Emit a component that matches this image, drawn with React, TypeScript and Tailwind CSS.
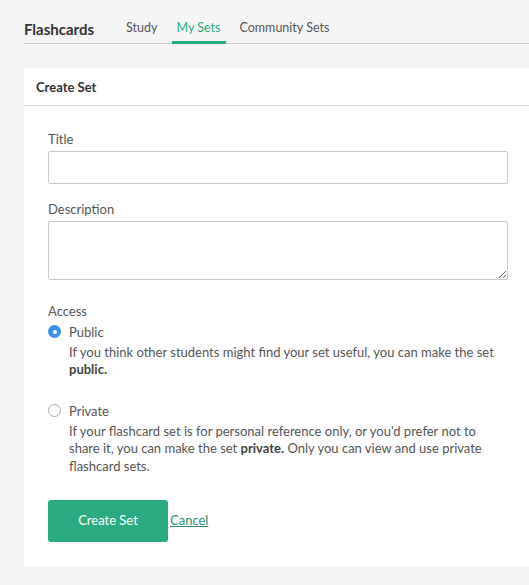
import { useState } from 'react';

const tabs = ['Study', 'My Sets', 'Community Sets'];

export default function App() {
  const [access, setAccess] = useState<'public' | 'private'>('public');
  const active = 'My Sets';

  return (
    <div className="min-h-[585px] bg-[#f5f5f5] pt-[18px] pb-[19px] pl-6 font-['Lato',sans-serif] text-[#555]">
      <header className="flex items-end border-b border-[#d0d0d0]">
        <h1 className="pb-[2px] pr-[28px] text-[15px] font-bold text-[#333]">Flashcards</h1>
        <nav className="flex gap-[10px]">
          {tabs.map((tab) => (
            <a
              key={tab}
              className={
                tab === active
                  ? 'mb-[-1px] border-b-[3px] border-[#2bab82] px-[5px] pb-[3px] text-[12.5px] text-[#2bab82]'
                  : 'mb-[-1px] border-b-[3px] border-transparent px-[4px] pb-[3px] text-[12.5px] text-[#555]'
              }
              href="#"
            >
              {tab}
            </a>
          ))}
        </nav>
      </header>

      <section className="mt-6 bg-white">
        <div className="border-b border-[#d6d6d6] px-3 pt-[10px] pb-[8px]">
          <h2 className="text-[13px] font-bold text-[#333]">Create Set</h2>
        </div>

        <form className="px-6 pt-[24px] pb-6" onSubmit={(event) => event.preventDefault()}>
          <label className="block text-[13px]">Title</label>
          <input className="mt-[1px] block h-[33px] w-[460px] rounded-[2px] border border-[#c9c9c9] px-2" />

          <label className="mt-[16px] block text-[13px]">Description</label>
          <textarea className="mt-[2px] block h-[59px] w-[460px] rounded-[2px] border border-[#c9c9c9] px-2" />

          <p className="mt-[22px] text-[13px]">Access</p>
          <AccessOption
            checked={access === 'public'}
            label="Public"
            onSelect={() => setAccess('public')}
          >
            If you think other students might find your set useful, you can make the set{' '}
            <b className="text-[#444]">public.</b>
          </AccessOption>
          <div className="h-[22px]" />
          <AccessOption
            checked={access === 'private'}
            label="Private"
            onSelect={() => setAccess('private')}
          >
            If your flashcard set is for personal reference only, or you'd prefer not to share
            it, you can make the set <b className="text-[#444]">private.</b> Only you can view
            and use private flashcard sets.
          </AccessOption>

          <div className="mt-[25px] flex items-center gap-[2px]">
            <button
              className="h-[42px] w-[120px] rounded-[3px] bg-[#2bab82] text-[13px] text-white"
              type="submit"
            >
              Create Set
            </button>
            <a className="text-[13px] text-[#2b8f6e] underline" href="#">
              Cancel
            </a>
          </div>
        </form>
      </section>
    </div>
  );
}

function AccessOption({
  checked,
  label,
  onSelect,
  children,
}: {
  checked: boolean;
  label: string;
  onSelect: () => void;
  children: React.ReactNode;
}) {
  return (
    <div className="mt-[1px]">
      <button className="flex items-center gap-[8px]" onClick={onSelect} type="button">
        {checked ? (
          <span className="flex h-[13px] w-[13px] items-center justify-center rounded-full bg-[#3b8fef]">
            <span className="h-[4px] w-[4px] rounded-full bg-white" />
          </span>
        ) : (
          <span className="h-[13px] w-[13px] rounded-full border border-[#a8a8a8] bg-white" />
        )}
        <span className="text-[13px] leading-[18px]">{label}</span>
      </button>
      <p className="mt-[3px] pl-[21px] text-[13px] leading-[17.5px]">{children}</p>
    </div>
  );
}
